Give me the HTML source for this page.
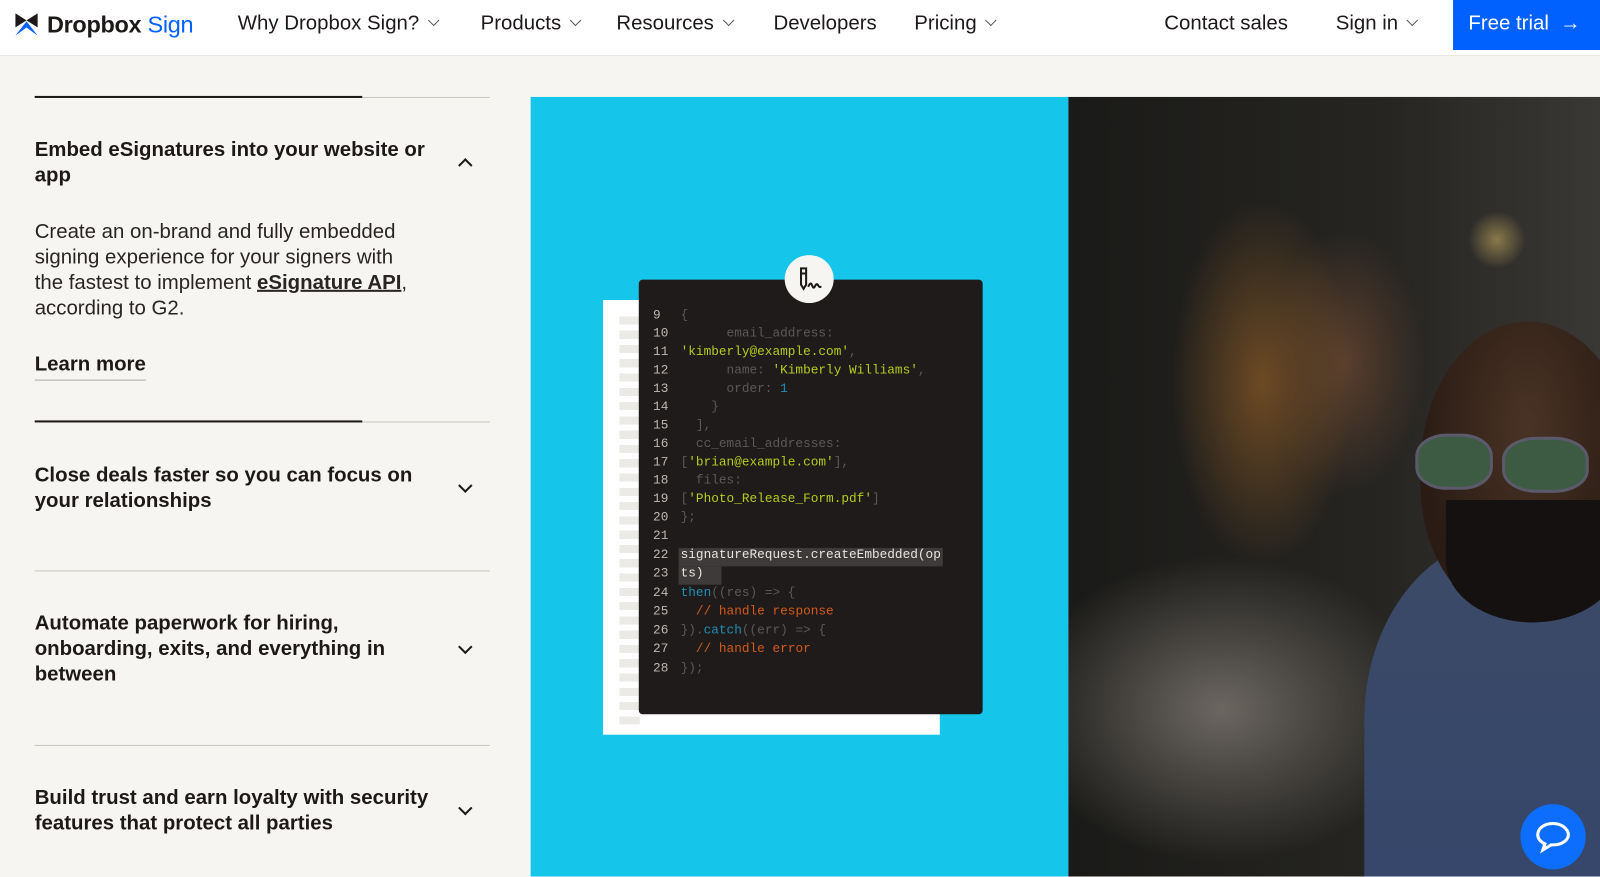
<!DOCTYPE html>
<html><head><meta charset="utf-8"><style>
*{margin:0;padding:0;box-sizing:border-box}
html,body{width:1600px;height:877px;overflow:hidden;background:#f7f5f2}
#w{width:1568px;height:859px;overflow:hidden;transform:scale(1.02041);transform-origin:0 0;position:relative;font-family:"Liberation Sans",sans-serif;color:#1e1919}
.hdr{position:absolute;left:0;top:0;width:1568px;height:55px;background:#fff;border-bottom:1px solid #e8e5e0}
.nav{position:absolute;top:12px;font-size:20px;color:#1e1919}
.chev{display:inline-block;width:8px;height:8px;border-right:1.6px solid #555;border-bottom:1.6px solid #555;transform:rotate(45deg);margin-left:10px;position:relative;top:-5px}
.btn{position:absolute;left:1424px;top:0;width:144px;height:49px;background:#0061fe;color:#fff;font-size:20px;padding:12px 0 0 15px}
.sec{position:absolute;left:34px;width:446px}
.line{position:absolute;left:34px;width:446px;height:1px;background:#c9c5bf}
.line b{position:absolute;left:0;top:-1px;width:321px;height:2px;background:#1e1919}
.q{font-size:20px;font-weight:bold;line-height:25px;color:#1e1919}
.ac{position:absolute;left:451px;width:10px;height:10px;border-right:2px solid #1e1919;border-bottom:2px solid #1e1919;transform:rotate(45deg)}
.p{font-size:20px;line-height:25px;color:#2a2525}
.code{position:absolute;left:626px;top:274px;width:337px;height:426px;background:#1f1b1b;border-radius:4px;font-family:"Liberation Mono",monospace;font-size:12.5px;color:#5d5858}
.code div{position:absolute;white-space:pre;height:18px}
.n{left:14px;color:#bdb8b2}
.c{left:41px}
.g{color:#b4cc1c}.o{color:#d35a1b}.t{color:#1f8fb5}
</style></head><body><div id="w">
<div class="hdr">
<svg style="position:absolute;left:15px;top:13px" width="22" height="22" viewBox="0 0 22 22"><path d="M0 0L11 7L0 14Z" fill="#1e1919"/><path d="M22 0L11 7L22 14Z" fill="#1e1919"/><path d="M0 22L11 8L11 14Z" fill="#0061fe"/><path d="M22 22L11 8L11 14Z" fill="#0061fe"/></svg>
<div class="nav" style="left:46px;top:11px;font-size:23px;font-weight:bold;letter-spacing:-0.3px">Dropbox <span style="color:#0061fe;font-weight:normal">Sign</span></div>
<div class="nav" style="left:233px">Why Dropbox Sign?<span class="chev"></span></div>
<div class="nav" style="left:471px">Products<span class="chev"></span></div>
<div class="nav" style="left:604px">Resources<span class="chev"></span></div>
<div class="nav" style="left:758px">Developers</div>
<div class="nav" style="left:896px">Pricing<span class="chev"></span></div>
<div class="nav" style="left:1141px">Contact sales</div>
<div class="nav" style="left:1309px">Sign in<span class="chev"></span></div>
<div class="btn">Free trial &nbsp;→</div>
</div>

<div class="line" style="top:95px"><b></b></div>
<div class="sec q" style="top:135px;width:400px">Embed eSignatures into your website or app</div>
<div class="ac" style="top:157px;transform:rotate(225deg)"></div>
<div class="sec p" style="top:215px;width:380px">Create an on-brand and fully embedded signing experience for your signers with the fastest to implement <b style="text-decoration:underline">eSignature API</b>, according to G2.</div>
<div class="sec q" style="top:345px;width:auto;border-bottom:1px solid #aaa;padding-bottom:2px">Learn more</div>
<div class="line" style="top:413px"><b></b></div>
<div class="sec q" style="top:454px;width:400px">Close deals faster so you can focus on your relationships</div>
<div class="ac" style="top:471px"></div>
<div class="line" style="top:559px"></div>
<div class="sec q" style="top:599px;width:400px">Automate paperwork for hiring, onboarding, exits, and everything in between</div>
<div class="ac" style="top:629px"></div>
<div class="line" style="top:730px"></div>
<div class="sec q" style="top:770px;width:410px">Build trust and earn loyalty with security features that protect all parties</div>
<div class="ac" style="top:787px"></div>

<div style="position:absolute;left:520px;top:95px;width:527px;height:765px;background:#16c6ea"></div>
<div style="position:absolute;left:591px;top:294px;width:330px;height:426px;background:#fff"></div>
<div style="position:absolute;left:607px;top:310px;width:20px;height:400px;background:repeating-linear-gradient(#eceae6 0 8px,#fff 8px 14px)"></div>
<div class="code">
<div class="n" style="top:28px">9</div><div class="c" style="top:28px">{</div>
<div class="n" style="top:46px">10</div><div class="c" style="top:46px">      email_address:</div>
<div class="n" style="top:64px">11</div><div class="c" style="top:64px"><span class="g">'kimberly@example.com'</span>,</div>
<div class="n" style="top:82px">12</div><div class="c" style="top:82px">      name: <span class="g">'Kimberly Williams'</span>,</div>
<div class="n" style="top:100px">13</div><div class="c" style="top:100px">      order: <span class="t">1</span></div>
<div class="n" style="top:118px">14</div><div class="c" style="top:118px">    }</div>
<div class="n" style="top:136px">15</div><div class="c" style="top:136px">  ],</div>
<div class="n" style="top:154px">16</div><div class="c" style="top:154px">  cc_email_addresses:</div>
<div class="n" style="top:172px">17</div><div class="c" style="top:172px">[<span class="g">'brian@example.com'</span>],</div>
<div class="n" style="top:190px">18</div><div class="c" style="top:190px">  files:</div>
<div class="n" style="top:208px">19</div><div class="c" style="top:208px">[<span class="g">'Photo_Release_Form.pdf'</span>]</div>
<div class="n" style="top:226px">20</div><div class="c" style="top:226px">};</div>
<div class="n" style="top:244px">21</div>
<div class="n" style="top:263px">22</div><div class="c" style="top:263px;left:39px;background:#3e3a3a;color:#e8e4df;padding:0 2px">signatureRequest.createEmbedded(op</div>
<div class="n" style="top:281px">23</div><div class="c" style="top:281px;left:39px;background:#3e3a3a;color:#e8e4df;padding:0 2px">ts)  </div>
<div class="n" style="top:300px">24</div><div class="c" style="top:300px"><span class="t">then</span>((res) => {</div>
<div class="n" style="top:318px">25</div><div class="c" style="top:318px">  <span class="o">// handle response</span></div>
<div class="n" style="top:337px">26</div><div class="c" style="top:337px">}).<span class="t">catch</span>((err) => {</div>
<div class="n" style="top:355px">27</div><div class="c" style="top:355px">  <span class="o">// handle error</span></div>
<div class="n" style="top:374px">28</div><div class="c" style="top:374px">});</div>
</div>
<div style="position:absolute;left:769px;top:250px;width:48px;height:47px;border-radius:50%;background:#f7f5f2"></div>
<svg style="position:absolute;left:779px;top:259px" width="30" height="30" viewBox="0 0 30 30" fill="none" stroke="#1e1919" stroke-width="2"><path d="M6 4h5v16l-2.5 4L6 20Z"/><path d="M6 9h5"/><path d="M13 22c2-4 3-4 4-1s2 2 3 0 2-2 3 0 2 1 3 1"/></svg>

<div style="position:absolute;left:1047px;top:95px;width:521px;height:765px;overflow:hidden;background:
radial-gradient(ellipse 90px 180px at 190px 280px,#6d4a24 0%,transparent 100%),
radial-gradient(ellipse 80px 130px at 270px 260px,#5a3f2e 0%,transparent 100%),
radial-gradient(ellipse 200px 150px at 150px 600px,#6b6660 0%,transparent 100%),
radial-gradient(circle at 420px 140px,#8a7a4a 0,transparent 28px),
linear-gradient(90deg,#1a1a18,#262522 60%,#3a3834)">
<div style="position:absolute;left:290px;top:430px;width:320px;height:400px;border-radius:45% 45% 0 0;background:linear-gradient(#3c4a66,#34466c)"></div>
<div style="position:absolute;left:345px;top:220px;width:210px;height:290px;border-radius:50% 50% 45% 45%;background:radial-gradient(ellipse at 50% 35%,#4a3325,#2a1c15 70%)"></div>
<div style="position:absolute;left:370px;top:395px;width:170px;height:120px;border-radius:0 0 50% 50%;background:#141110"></div>
<div style="position:absolute;left:340px;top:330px;width:76px;height:55px;border:3px solid #5a5a6a;border-radius:40%;background:#3d5a42"></div>
<div style="position:absolute;left:425px;top:333px;width:85px;height:55px;border:3px solid #5a5a6a;border-radius:40%;background:#3d5a42"></div>
</div>
<div style="position:absolute;left:1490px;top:788px;width:64px;height:64px;border-radius:50%;background:#0d6efd"></div>
<svg style="position:absolute;left:1502px;top:800px" width="40" height="40" viewBox="0 0 40 40"><path d="M20 7C11 7 5 12 5 18c0 4 3 7 7 9l-2 6 8-5h2c9 0 15-5 15-10S29 7 20 7Z" fill="none" stroke="#fff" stroke-width="3"/></svg>
</div></body></html>
